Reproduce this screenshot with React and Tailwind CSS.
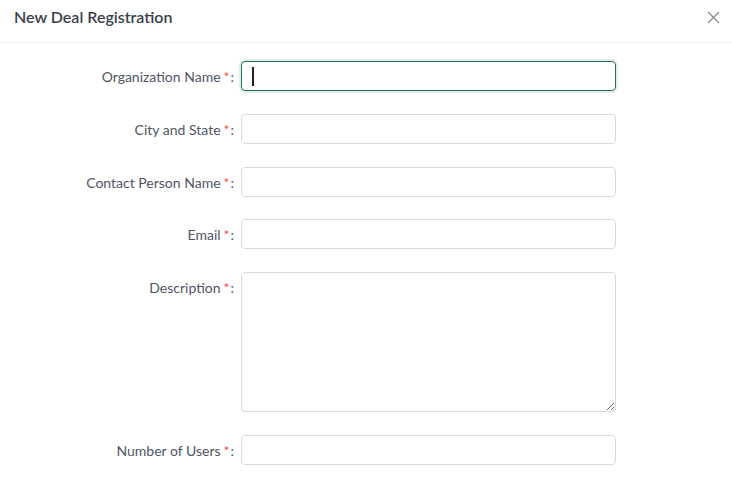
import React from "react";

const fields = [
  { label: "Organization Name", focused: true },
  { label: "City and State" },
  { label: "Contact Person Name", tight: true },
  { label: "Email" },
  { label: "Description", textarea: true },
  { label: "Number of Users" },
];

const Label = ({ text, top }) => (
  <label
    className={`w-[234px] shrink-0 text-right text-[14px] text-[#505564] ${
      top ? "pt-[5px]" : "self-center"
    }`}
  >
    {text}
    <span className="text-[#ff4d4f] ml-[3px]">*</span>
    <span className="ml-[1px]">:</span>
  </label>
);

export default function App() {
  return (
    <div
      className="w-[732px] h-[483px] bg-white overflow-hidden"
      style={{ fontFamily: "'Segoe UI', Lato, 'Noto Sans', sans-serif" }}
    >
      {/* Header */}
      <div className="h-[43px] flex items-start justify-between pl-[14px] pr-[12px] pt-[6px] border-b border-[#f0f0f0]">
        <h2 className="text-[16px] leading-[22px] font-semibold text-[#3a3f4b]">New Deal Registration</h2>
        <button className="w-[14px] h-[14px] mt-[4px] flex items-center justify-center" aria-label="Close">
          <svg width="13" height="13" viewBox="0 0 13 13" fill="none" stroke="#8c8c8c" strokeWidth="1.3">
            <path d="M1 1L12 12M12 1L1 12" />
          </svg>
        </button>
      </div>

      {/* Form */}
      <form className="pt-[18px] flex flex-col">
        {fields.map((f) => (
          <div key={f.label} className={`flex gap-[7px] ${f.tight ? "mb-[22px]" : "mb-[23px]"}`}>
            <Label text={f.label} top={f.textarea} />
            {f.textarea ? (
              <textarea className="w-[375px] h-[140px] rounded-[4px] border border-[#d9d9d9] outline-none px-[10px] py-[5px] text-[14px]" />
            ) : (
              <div className="relative">
                <input
                  className={`w-[375px] h-[30px] rounded-[4px] border outline-none px-[10px] text-[14px] ${
                    f.focused
                      ? "border-[#1f6f5c] shadow-[0_0_0_2px_rgba(31,111,92,0.12)]"
                      : "border-[#d9d9d9]"
                  }`}
                />
                {f.focused && (
                  <span className="absolute left-[11px] top-[6px] w-[2px] h-[19px] bg-[#222]" />
                )}
              </div>
            )}
          </div>
        ))}
      </form>
    </div>
  );
}
